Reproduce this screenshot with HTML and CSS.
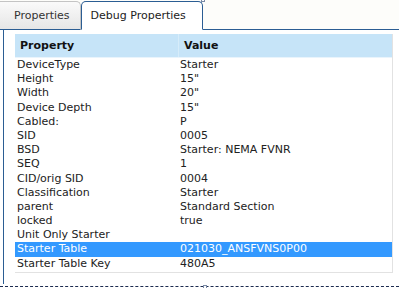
FILE: index.html
```html
<!DOCTYPE html>
<html lang="en">
  <head>
    <meta charset="UTF-8" />
    <title>Debug Properties</title>
    <link rel="stylesheet" href="styles.css">
  </head>
  <body>
    <div class="frame">
      <div class="tabs">
        <div class="tab">Properties</div>
        <div class="tab active">Debug Properties</div>
        <span class="handle handle-top"></span>
      </div>

      <div class="panel">
        <div class="grid">
          <div class="row head">
            <div class="cell">Property</div>
            <div class="cell">Value</div>
          </div>
          <div class="row"><div class="cell">DeviceType</div><div class="cell">Starter</div></div>
          <div class="row"><div class="cell">Height</div><div class="cell">15"</div></div>
          <div class="row"><div class="cell">Width</div><div class="cell">20"</div></div>
          <div class="row"><div class="cell">Device Depth</div><div class="cell">15"</div></div>
          <div class="row"><div class="cell">Cabled:</div><div class="cell">P</div></div>
          <div class="row"><div class="cell">SID</div><div class="cell">0005</div></div>
          <div class="row"><div class="cell">BSD</div><div class="cell">Starter: NEMA FVNR</div></div>
          <div class="row"><div class="cell">SEQ</div><div class="cell">1</div></div>
          <div class="row"><div class="cell">CID/orig SID</div><div class="cell">0004</div></div>
          <div class="row"><div class="cell">Classification</div><div class="cell">Starter</div></div>
          <div class="row"><div class="cell">parent</div><div class="cell">Standard Section</div></div>
          <div class="row"><div class="cell">locked</div><div class="cell">true</div></div>
          <div class="row"><div class="cell">Unit Only Starter</div><div class="cell"></div></div>
          <div class="row selected"><div class="cell">Starter Table</div><div class="cell">021030_ANSFVNS0P00</div></div>
          <div class="row"><div class="cell">Starter Table Key</div><div class="cell">480A5</div></div>
        </div>
      </div>
      <span class="handle handle-bottom"></span>
    </div>
  </body>
</html>
```

FILE: styles.css
```css
:root {
  --tab-blue: #2b5d93;
  --head-bg: #c6e4f8;
  --select-bg: #3399ff;
  --text: #222222;
}

* {
  margin: 0;
  padding: 0;
  box-sizing: border-box;
}

body {
  font-family: "DejaVu Sans", Verdana, sans-serif;
  font-size: 11px;
  color: var(--text);
  background: #ffffff;
  width: 399px;
  height: 289px;
  overflow: hidden;
}

.frame {
  position: relative;
  padding-bottom: 2px;
  border-bottom: 1px dashed #1c2b4f;
}

/* tab strip */
.tabs {
  position: relative;
  display: flex;
  align-items: flex-end;
  height: 30px;
  padding-top: 1px;
  background: #fdfdfa;
  border-bottom: 1px solid var(--tab-blue);
}

.tab {
  height: 29px;
  line-height: 27px;
  padding: 0 10px 0 14px;
  margin-bottom: -1px;
  border: 1px solid #c4c4c4;
  border-left: none;
  border-bottom: 1px solid var(--tab-blue);
  border-radius: 0 5px 0 0;
  background: linear-gradient(#fafafa, #e6e6e6);
  color: #333333;
}

.tab.active {
  width: 122px;
  padding-left: 9px;
  border: 1px solid var(--tab-blue);
  border-bottom-color: #ffffff;
  border-radius: 5px 5px 0 0;
  background: #ffffff;
  color: #222222;
}

.handle {
  position: absolute;
  width: 4px;
  height: 3px;
  border: 1px solid #7a8aa6;
  background: #ffffff;
}

.handle-top {
  left: 201px;
  top: -1px;
}

.handle-bottom {
  left: 203px;
  bottom: -2px;
  border-bottom: none;
}

/* property panel */
.panel {
  margin-left: 3px;
  height: 254px;
  padding: 4px 6px 0 11px;
  border-left: 1px solid var(--tab-blue);
  background: #ffffff;
}

.grid {
  display: grid;
  grid-template-rows: 24px;
  grid-auto-rows: 14.2px;
  border-right: 1px solid #e2e2e2;
  border-bottom: 1px solid #e2e2e2;
  padding-bottom: 1px;
}

.row {
  display: grid;
  grid-template-columns: 163px 1fr;
  line-height: 14px;
}

.row .cell {
  padding-left: 2px;
  white-space: nowrap;
}

.row.head {
  background: var(--head-bg);
  line-height: 23px;
  font-weight: bold;
  color: #111111;
  border-bottom: 1px solid #e9f4fc;
}

.row.head .cell {
  padding-left: 5px;
}

.row.head .cell + .cell {
  border-left: 1px solid #d6ecfa;
}

.row.selected {
  background: var(--select-bg);
  color: #ffffff;
}
```
